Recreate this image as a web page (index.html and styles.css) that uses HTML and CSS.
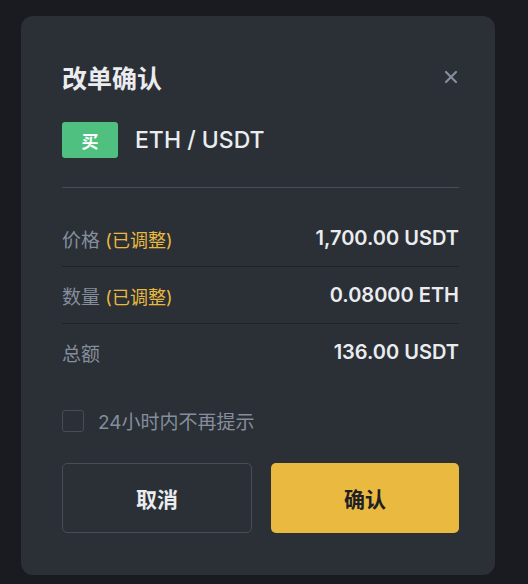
FILE: index.html
```html
<!DOCTYPE html>
<html lang="zh">
<head>
    <meta charset="UTF-8">
    <meta name="viewport" content="width=device-width, initial-scale=1.0">
    <title>改单确认</title>
    <link rel="stylesheet" href="styles.css">
</head>
<body>

    <!-- 改单确认弹窗 -->
    <div class="modal">
        <div class="modal-head">
            <h2 class="modal-title">改单确认</h2>
            <span class="close-btn">
                <svg width="14" height="14" viewBox="0 0 14 14">
                    <path d="M2 2 L12 12 M12 2 L2 12" stroke="#848e9c" stroke-width="2.2" stroke-linecap="round"/>
                </svg>
            </span>
        </div>

        <div class="pair">
            <span class="side-tag">买</span>
            <span class="pair-name">ETH / USDT</span>
        </div>

        <div class="rows">
            <div class="row">
                <span class="label">价格 <em>(已调整)</em></span>
                <span class="value">1,700.00 USDT</span>
            </div>
            <div class="row">
                <span class="label">数量 <em>(已调整)</em></span>
                <span class="value">0.08000 ETH</span>
            </div>
            <div class="row">
                <span class="label">总额</span>
                <span class="value">136.00 USDT</span>
            </div>
        </div>

        <label class="remember">
            <span class="check-box"></span>
            24小时内不再提示
        </label>

        <div class="actions">
            <button class="btn btn-cancel">取消</button>
            <button class="btn btn-confirm">确认</button>
        </div>
    </div>

</body>
</html>
```

FILE: styles.css
```css
body {
    font-family: Inter, "Noto Sans CJK SC", sans-serif;
    background-color: #1a1b20;
    margin: 0;
    padding: 16px 0 0 21px;
}
.modal {
    width: 474px;
    height: 559px;
    box-sizing: border-box;
    background: #2b2f36;
    border-radius: 12px;
    padding: 40px 36px 0 41px;
}
.modal-head {
    display: flex;
    justify-content: space-between;
    align-items: center;
    height: 42px;
}
.modal-title {
    margin: 0;
    font-size: 25px;
    font-weight: 700;
    color: #eaecef;
}
.close-btn {
    display: flex;
    margin-right: 1px;
    cursor: pointer;
}
.pair {
    display: flex;
    align-items: center;
    gap: 17px;
    margin-top: 24px;
    padding-bottom: 29px;
    border-bottom: 1px solid #474d57;
}
.side-tag {
    width: 56px;
    height: 36px;
    display: flex;
    align-items: center;
    justify-content: center;
    background: #4fc07f;
    color: #ffffff;
    font-size: 17px;
    font-weight: 700;
    border-radius: 3px;
}
.pair-name {
    font-size: 23px;
    font-weight: 500;
    color: #eaecef;
}
.rows {
    padding-top: 22px;
}
.row {
    display: flex;
    justify-content: space-between;
    align-items: center;
    height: 56px;
    border-bottom: 1px solid #1f2228;
}
.row:last-child {
    border-bottom: none;
}
.label {
    font-size: 19px;
    color: #848e9c;
}
.label em {
    font-style: normal;
    font-size: 18px;
    color: #e8b93e;
}
.value {
    font-size: 20px;
    font-weight: 600;
    color: #eaecef;
}
.remember {
    display: flex;
    align-items: center;
    gap: 14px;
    margin-top: 27px;
    font-size: 19px;
    color: #848e9c;
}
.check-box {
    width: 20px;
    height: 20px;
    border: 1px solid #474d57;
    border-radius: 3px;
}
.actions {
    display: flex;
    gap: 19px;
    margin-top: 29px;
}
.btn {
    flex: 1;
    height: 70px;
    border-radius: 5px;
    font-family: inherit;
    font-size: 21px;
    font-weight: 700;
    cursor: pointer;
}
.btn-cancel {
    background: transparent;
    border: 1px solid #474d57;
    color: #eaecef;
}
.btn-confirm {
    background: #e9ba3f;
    border: none;
    color: #1e2026;
}
```
